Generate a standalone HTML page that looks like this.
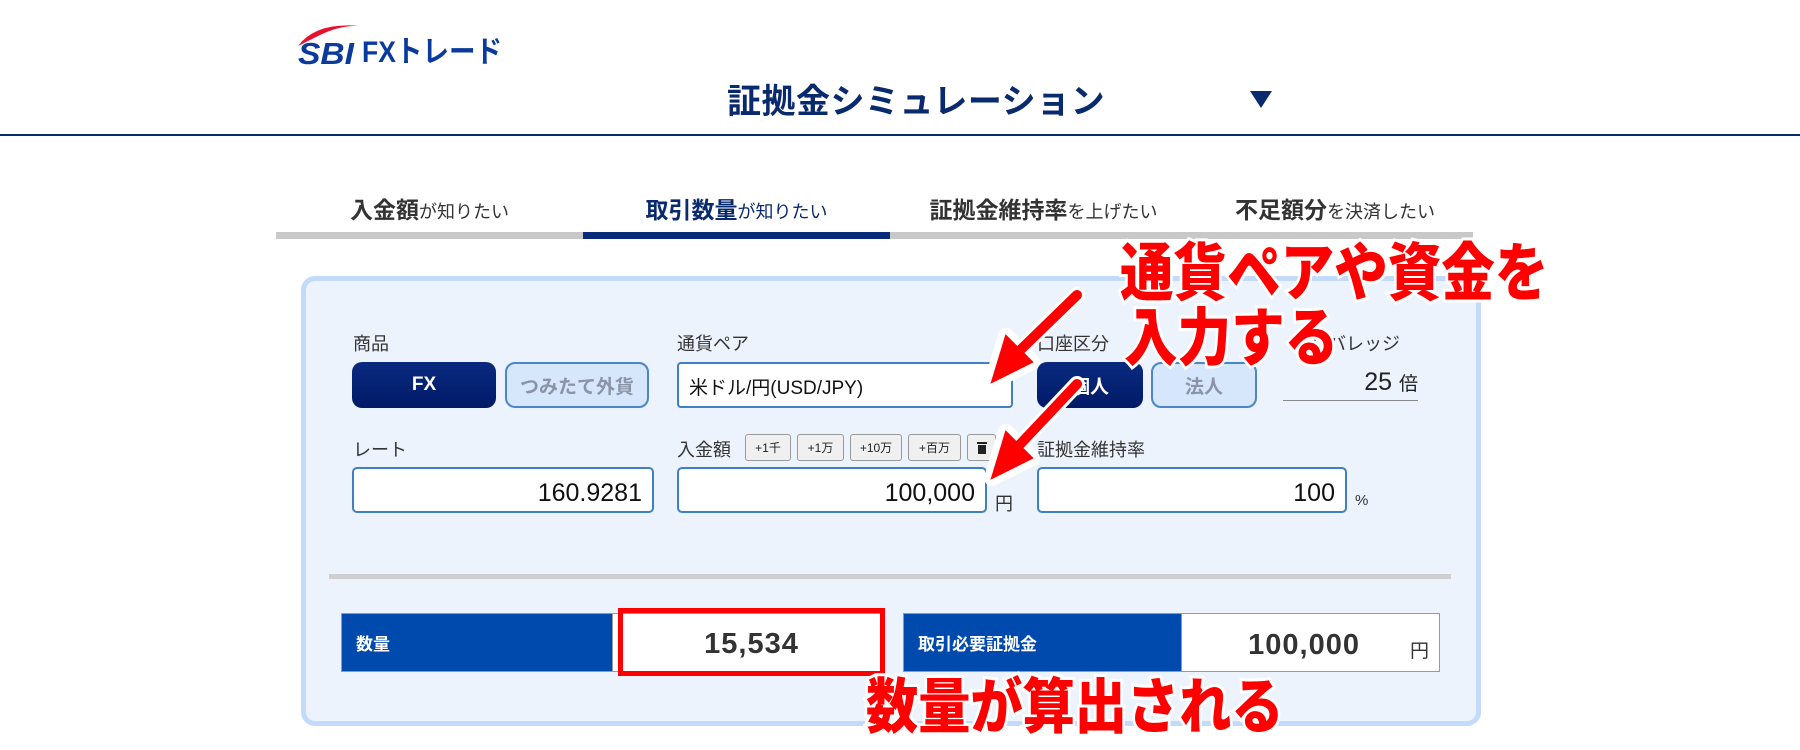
<!DOCTYPE html>
<html><head><meta charset="utf-8">
<style>
*{margin:0;padding:0;box-sizing:border-box}
body{width:1800px;height:750px;background:#fff;position:relative;overflow:hidden;font-family:"Liberation Sans","Noto Sans CJK JP",sans-serif;color:#333}
.a{position:absolute}
.lbl{font-size:18px;color:#333;white-space:nowrap}
.btn{position:absolute;border-radius:10px;display:flex;align-items:center;justify-content:center;font-size:19px}
.on{background:linear-gradient(#0a2a80,#001a66);color:#fff;font-weight:bold}
.off{background:#d6e6fb;border:2px solid #4a86c8;color:#8a94a6;font-weight:bold}
.inp{position:absolute;background:#fff;border:2px solid #3f7fc4;border-radius:5px;display:flex;align-items:center;padding:6px 10px 0;font-size:25px;color:#111;justify-content:flex-end}
.sb{position:absolute;top:434px;height:27px;background:#f0f0f0;border:1px solid #999;border-radius:3px;font-size:12px;display:flex;align-items:center;justify-content:center;color:#222}
.red{position:absolute;color:#f00;font-weight:900;white-space:nowrap;paint-order:stroke fill;-webkit-text-stroke:6px #fff;transform-origin:0 0}
</style></head><body>
<!-- logo -->
<svg class="a" style="left:294px;top:20px" width="215" height="48" viewBox="0 0 215 48">
<path d="M4 26 Q22 2 66 6 Q46 5 24 16 Q12 22 4 26Z" fill="#e8102e"/>
<text x="4" y="44" font-family="Liberation Sans" font-weight="bold" font-style="italic" font-size="31" fill="#0a3a9c" textLength="56" lengthAdjust="spacingAndGlyphs">SBI</text>
<text x="68" y="42" font-family="Liberation Sans,Noto Sans CJK JP" font-weight="bold" font-size="30" fill="#0a3a9c" textLength="140" lengthAdjust="spacingAndGlyphs">FXトレード</text>
</svg>
<div class="a" style="left:727px;top:74px;font-size:34px;font-weight:bold;color:#0a2a6e;letter-spacing:0.5px;white-space:nowrap">証拠金シミュレーション</div>
<svg class="a" style="left:1250px;top:91px" width="22" height="18"><path d="M0 0H22L11 17Z" fill="#0a2a6e"/></svg>
<div class="a" style="left:0;top:134px;width:1800px;height:2px;background:#0a2a6e"></div>
<!-- tabs -->
<div class="a" style="left:276px;top:232px;width:1197px;height:7px;background:#c8c8c8"></div>
<div class="a" style="left:583px;top:232px;width:307px;height:7px;background:#0a2a7a"></div>
<div class="a" style="left:276px;top:191px;width:307px;text-align:center;white-space:nowrap"><b style="font-size:23px">入金額</b><span style="font-size:18px">が知りたい</span></div>
<div class="a" style="left:583px;top:191px;width:307px;text-align:center;white-space:nowrap;color:#0a2a6e"><b style="font-size:23px">取引数量</b><span style="font-size:18px">が知りたい</span></div>
<div class="a" style="left:890px;top:191px;width:307px;text-align:center;white-space:nowrap"><b style="font-size:23px">証拠金維持率</b><span style="font-size:18px">を上げたい</span></div>
<div class="a" style="left:1197px;top:191px;width:276px;text-align:center;white-space:nowrap"><b style="font-size:23px">不足額分</b><span style="font-size:18px">を決済したい</span></div>
<!-- panel -->
<div class="a" style="left:301px;top:276px;width:1180px;height:450px;background:#edf3fd;border:5px solid #c3dafa;border-radius:14px"></div>
<div class="a lbl" style="left:353px;top:330px">商品</div>
<div class="a lbl" style="left:677px;top:330px">通貨ペア</div>
<div class="a lbl" style="left:1037px;top:330px">口座区分</div>
<div class="a lbl" style="left:1310px;top:330px">レバレッジ</div>
<div class="btn on" style="left:352px;top:362px;width:144px;height:46px">FX</div>
<div class="btn off" style="left:505px;top:362px;width:144px;height:46px">つみたて外貨</div>
<div class="inp" style="left:677px;top:362px;width:336px;height:46px;justify-content:flex-start;font-size:19px;border-radius:4px;padding-top:2px">米ドル/円(USD/JPY)</div>
<div class="btn on" style="left:1037px;top:362px;width:106px;height:46px">個人</div>
<div class="btn off" style="left:1151px;top:362px;width:106px;height:46px">法人</div>
<div class="a" style="left:1283px;top:368px;width:135px;text-align:right;font-size:25px;color:#222;white-space:nowrap">25 <span style="font-size:19px">倍</span></div>
<div class="a" style="left:1283px;top:400px;width:135px;height:1px;background:#888"></div>
<div class="a lbl" style="left:353px;top:436px">レート</div>
<div class="a lbl" style="left:677px;top:436px">入金額</div>
<div class="a lbl" style="left:1037px;top:436px">証拠金維持率</div>
<div class="sb" style="left:745px;width:46px">+1千</div>
<div class="sb" style="left:797px;width:47px">+1万</div>
<div class="sb" style="left:850px;width:52px">+10万</div>
<div class="sb" style="left:908px;width:53px">+百万</div>
<div class="sb" style="left:967px;width:29px"><svg width="10" height="13"><rect x="0" y="1" width="10" height="2" fill="#222"/><rect x="1" y="4" width="8" height="9" fill="#222"/></svg></div>
<div class="inp" style="left:352px;top:467px;width:302px;height:46px">160.9281</div>
<div class="inp" style="left:677px;top:467px;width:310px;height:46px">100,000</div>
<div class="a" style="left:995px;top:490px;font-size:18px">円</div>
<div class="inp" style="left:1037px;top:467px;width:310px;height:46px">100</div>
<div class="a" style="left:1355px;top:492px;font-size:15px">%</div>
<div class="a" style="left:329px;top:574px;width:1122px;height:5px;background:#cfcfcf"></div>
<!-- results -->
<div class="a" style="left:341px;top:613px;width:272px;height:59px;background:#004aad;border:1px solid #999;color:#fff;font-weight:bold;font-size:17px;display:flex;align-items:center;padding-left:14px">数量</div>
<div class="a" style="left:613px;top:613px;width:272px;height:59px;background:#fff;border-top:1px solid #999;border-bottom:1px solid #999"></div>
<div class="a" style="left:618px;top:608px;width:267px;height:68px;border:5px solid #f00;display:flex;align-items:center;justify-content:center;font-size:29px;font-weight:bold;color:#333;letter-spacing:1px;padding-top:4px">15,534</div>
<div class="a" style="left:903px;top:613px;width:279px;height:59px;background:#004aad;border:1px solid #999;color:#fff;font-weight:bold;font-size:17px;display:flex;align-items:center;padding-left:14px">取引必要証拠金</div>
<div class="a" style="left:1182px;top:613px;width:258px;height:59px;background:#fff;border:1px solid #999;border-left:none"></div>
<div class="a" style="left:1182px;top:629px;width:178px;text-align:right;font-size:29px;font-weight:bold;color:#333;letter-spacing:1px">100,000</div>
<div class="a" style="left:1410px;top:636px;font-size:19px">円</div>
<!-- arrows -->
<svg class="a" style="left:0;top:0" width="1800" height="750">
<g stroke="#fff" stroke-width="16" stroke-linecap="round" fill="#fff" stroke-linejoin="round">
<line x1="1077" y1="295" x2="1010" y2="360"/><path d="M992 382L1006 336L1032 362Z"/>
<line x1="1077" y1="384" x2="1010" y2="455"/><path d="M992 478L1006 432L1032 458Z"/>
</g>
<g stroke="#f00" stroke-width="10" stroke-linecap="round" fill="#f00">
<line x1="1077" y1="295" x2="1010" y2="360"/><path d="M992 382L1006 336L1032 362Z" stroke-width="2"/>
<line x1="1077" y1="384" x2="1010" y2="455"/><path d="M992 478L1006 432L1032 458Z" stroke-width="2"/>
</g>
</svg>
<div class="red" style="left:1120px;top:238px;font-size:63px;line-height:72px;transform:scaleX(0.85)">通貨ペアや資金を</div>
<div class="red" style="left:1124px;top:303px;font-size:63px;line-height:72px;transform:scaleX(0.85)">入力する</div>
<div class="red" style="left:866px;top:673px;font-size:60px;line-height:70px;transform:scaleX(0.87)">数量が算出される</div>
</body></html>
